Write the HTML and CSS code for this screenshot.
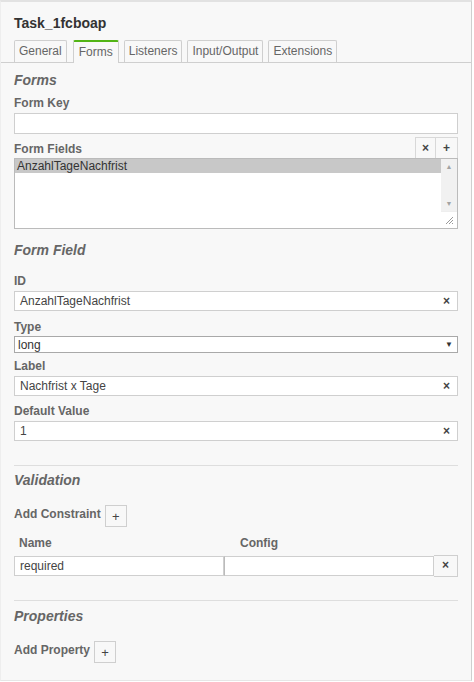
FILE: index.html
```html
<!DOCTYPE html>
<html>
<head>
<meta charset="utf-8">
<link rel="stylesheet" href="styles.css">
</head>
<body>
<div class="panel">
  <div class="title">Task_1fcboap</div>
  <div class="tabs">
    <div class="tab">General</div>
    <div class="tab active">Forms</div>
    <div class="tab">Listeners</div>
    <div class="tab">Input/Output</div>
    <div class="tab">Extensions</div>
  </div>
  <div class="content">
    <div class="heading h-forms">Forms</div>
    <div class="label l-formkey">Form Key</div>
    <div class="input"></div>

    <div class="ff-row">
      <div class="label">Form Fields</div>
      <div class="btn-group">
        <div class="sbtn">×</div>
        <div class="sbtn">+</div>
      </div>
    </div>
    <div class="listbox">
      <div class="list-items">
        <div class="item sel">AnzahlTageNachfrist</div>
      </div>
      <div class="scrollbar">
        <div class="sb-arrow">&#9650;</div>
        <div class="sb-track"></div>
        <div class="sb-arrow">&#9660;</div>
        <div class="sb-corner">
          <svg width="10" height="10" viewBox="0 0 10 10"><path d="M9 2 L2 9 M9 5 L5 9 M9 8 L8 9" stroke="#999" stroke-width="1"/></svg>
        </div>
      </div>
    </div>

    <div class="heading h-field">Form Field</div>
    <div class="label l-id">ID</div>
    <div class="input tall"><span class="val">AnzahlTageNachfrist</span><span class="clear">×</span></div>
    <div class="label l-type">Type</div>
    <div class="select"><span class="sval">long</span><span class="arrow">&#9660;</span></div>
    <div class="label l-lab">Label</div>
    <div class="input tall"><span class="val">Nachfrist x Tage</span><span class="clear">×</span></div>
    <div class="label l-def">Default Value</div>
    <div class="input tall"><span class="val">1</span><span class="clear">×</span></div>

    <div class="sep s1"></div>
    <div class="heading h-val">Validation</div>
    <div class="add-row r1">
      <div class="label">Add Constraint</div>
      <div class="addbtn">+</div>
    </div>
    <div class="tbl-head">
      <div class="th">Name</div>
      <div class="th th-config">Config</div>
      <div class="th-spacer"></div>
    </div>
    <div class="tbl-row">
      <div class="cell">required</div>
      <div class="cell"></div>
      <div class="cell-btn">×</div>
    </div>

    <div class="sep s2"></div>
    <div class="heading h-props">Properties</div>
    <div class="add-row r2">
      <div class="label">Add Property</div>
      <div class="addbtn">+</div>
    </div>
  </div>
</div>
</body>
</html>
```
FILE: styles.css
```css
html, body {
  margin: 0;
  padding: 0;
  background: #ffffff;
}
body {
  font-family: "Liberation Sans", Arial, sans-serif;
  font-size: 12px;
  color: #444;
}
.panel {
  width: 470px;
  height: 678px;
  background: #f8f8f8;
  border-top: 2px solid #e2e2e2;
  border-right: 1px solid #cfcfcf;
  border-bottom: 1px solid #e6e6e6;
  border-left: 1px solid #eeeeee;
  box-sizing: content-box;
}
.title {
  font-size: 14px;
  line-height: 16px;
  font-weight: bold;
  color: #333;
  padding: 13px 0 0 13px;
}
.tabs {
  display: flex;
  gap: 5px;
  margin-top: 9px;
  padding-left: 13px;
  border-bottom: 1px solid #cfcfcf;
  height: 22px;
  box-sizing: content-box;
}
.tab {
  height: 21px;
  line-height: 21px;
  padding: 0 4px;
  border: 1px solid #cfcfcf;
  border-bottom: none;
  border-radius: 2px 2px 0 0;
  color: #666;
  font-size: 12px;
  background: #f8f8f8;
}
.tab:first-child { margin-right: 1px; }
.tab.active {
  border-top: 2px solid #52b415;
  height: 21px;
  line-height: 20px;
  margin-bottom: -1px;
  position: relative;
  padding: 0 5px;
}
.content {
  padding: 0 13px 0 13px;
}
.heading {
  font-size: 14px;
  line-height: 16px;
  font-weight: bold;
  font-style: italic;
  color: #666;
}
.label {
  font-size: 12px;
  line-height: 14px;
  font-weight: bold;
  color: #666;
}
.h-forms { margin-top: 9px; }
.l-formkey { margin-top: 8px; margin-bottom: 3px; }
.input {
  height: 21px;
  background: #fff;
  border: 1px solid #cfcfcf;
  box-sizing: border-box;
  display: flex;
  align-items: center;
  justify-content: space-between;
  padding: 0 7px 0 5px;
  color: #444;
}
.input.tall { height: 20px; }
.clear {
  font-size: 12px;
  font-weight: bold;
  color: #444;
}
.ff-row {
  margin-top: 3px;
  height: 21px;
  display: flex;
  align-items: center;
  justify-content: space-between;
}
.ff-row .label { padding-top: 2px; }
.btn-group {
  display: flex;
  height: 21px;
}
.sbtn {
  width: 21px;
  height: 21px;
  box-sizing: border-box;
  border: 1px solid #d8d8d8;
  border-bottom: none;
  text-align: center;
  line-height: 20px;
  font-weight: bold;
  color: #444;
  font-size: 12px;
}
.sbtn + .sbtn { border-left: none; width: 22px; }
.listbox {
  height: 71px;
  border: 1px solid #bbb;
  background: #fff;
  box-sizing: border-box;
  display: flex;
}
.list-items { flex: 1; }
.item {
  height: 14px;
  line-height: 14px;
  padding-left: 2px;
  color: #333;
  font-size: 12px;
}
.item.sel { background: #c8c8c8; }
.scrollbar {
  width: 16px;
  display: flex;
  flex-direction: column;
  background: #f1f1f1;
}
.sb-arrow {
  height: 15px;
  font-size: 7px;
  line-height: 15px;
  text-align: center;
  color: #a3a3a3;
}
.sb-track { flex: 1; }
.sb-corner {
  height: 16px;
  background: #fff;
  display: flex;
  align-items: center;
  justify-content: center;
  border-top: 1px solid #eee;
}
.h-field { margin-top: 13px; }
.l-id { margin-top: 16px; margin-bottom: 3px; }
.l-type { margin-top: 9px; margin-bottom: 2px; }
.l-lab { margin-top: 6px; margin-bottom: 3px; }
.l-def { margin-top: 8px; margin-bottom: 3px; }
.select {
  height: 17px;
  background: #fff;
  border: 1px solid #a9a9a9;
  box-sizing: border-box;
  display: flex;
  align-items: center;
  justify-content: space-between;
  padding: 0 4px 0 3px;
  color: #333;
}
.arrow {
  font-size: 8px;
  color: #333;
}
.sep {
  height: 1px;
  background: #dedede;
}
.s1 { margin-top: 24px; }
.h-val { margin-top: 6px; }
.add-row {
  display: flex;
  align-items: center;
  gap: 4px;
  height: 22px;
}
.add-row .label { padding-bottom: 4px; }
.r1 { margin-top: 17px; }
.addbtn {
  width: 22px;
  height: 22px;
  box-sizing: border-box;
  border: 1px solid #cfcfcf;
  background: #f8f8f8;
  text-align: center;
  line-height: 21px;
  font-size: 13px;
  color: #444;
}
.tbl-head {
  display: flex;
  margin-top: 9px;
  height: 14px;
  line-height: 14px;
}
.th {
  width: 210px;
  padding-left: 5px;
  box-sizing: border-box;
  font-weight: bold;
  color: #666;
}
.th-config { padding-left: 16px; }
.th-spacer { flex: 1; }
.tbl-row {
  display: flex;
  margin-top: 6px;
  height: 20px;
}
.cell {
  width: 210px;
  box-sizing: border-box;
  border: 1px solid #cfcfcf;
  background: #fff;
  padding-left: 5px;
  line-height: 18px;
  color: #444;
}
.cell + .cell { border-left: 1px solid #bbb; }
.cell-btn {
  flex: 1;
  box-sizing: border-box;
  border: 1px solid #cfcfcf;
  border-left: none;
  background: #f8f8f8;
  text-align: center;
  line-height: 19px;
  font-weight: bold;
  color: #444;
  height: 22px;
  margin-top: -1px;
}
.s2 { margin-top: 24px; }
.h-props { margin-top: 7px; }
.r2 { margin-top: 17px; }
```
